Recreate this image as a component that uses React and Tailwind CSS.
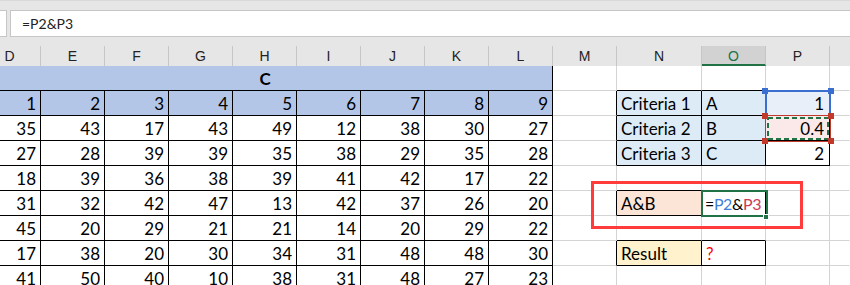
import React from "react";

const rows = [
  [35, 43, 17, 43, 49, 12, 38, 30, 27],
  [27, 28, 39, 39, 35, 38, 29, 35, 28],
  [18, 39, 36, 38, 39, 41, 42, 17, 22],
  [31, 32, 42, 47, 13, 42, 37, 26, 20],
  [45, 20, 29, 21, 21, 14, 20, 29, 22],
  [17, 38, 20, 30, 34, 31, 48, 48, 30],
  [41, 50, 40, 10, 38, 31, 48, 27, 23],
];

// column widths D..L (D is scrolled partly off the left edge)
const widths = [
  "w-[41px]",
  "w-[64px]",
  "w-[64px]",
  "w-[64px]",
  "w-[64px]",
  "w-[64px]",
  "w-[64px]",
  "w-[64px]",
  "w-[64px]",
];

const letters = ["D", "E", "F", "G", "H", "I", "J", "K", "L"];

function Num({ w, children, blue }) {
  return (
    <div
      className={`${w} h-[25px] shrink-0 border-r border-b border-black text-right pr-[4px] pt-[1px] leading-[23px] ${
        blue ? "bg-[#b4c6e7]" : ""
      }`}
    >
      {children}
    </div>
  );
}

// right side cells M..Q
function Cell({ w, bg = "", r = "border-r-[#d4d4d4]", b = "border-b-[#d4d4d4]", cls = "", children }) {
  return (
    <div className={`${w} h-[25px] shrink-0 border-r border-b ${r} ${b} ${bg} pt-[1px] leading-[23px] ${cls}`}>
      {children}
    </div>
  );
}

function RightRow({ m, n, o, p }) {
  return (
    <div className="flex">
      <Cell w="w-[64px]" r={m ? "border-r-black" : "border-r-[#d4d4d4]"} />
      <Cell w="w-[85px]" {...n} />
      <Cell w="w-[64px]" {...o} />
      <Cell w="w-[64px]" {...p} />
      <Cell w="w-[20px]" r="border-r-transparent" />
    </div>
  );
}

const blk = { r: "border-r-black", b: "border-b-black" };

function Corner({ cls }) {
  return <div className={`absolute w-[6px] h-[6px] ${cls}`} />;
}

export default function App() {
  return (
    <div className="relative w-[850px] h-[285px] overflow-hidden bg-white text-[17px] text-black font-['Lato','Liberation_Sans',sans-serif]">
      {/* formula bar */}
      <div className="h-[10px] bg-[#e6e6e6] border-t border-[#d9d9d9]" />
      <div className="flex h-[27px] bg-[#e6e6e6]">
        <div className="w-[7px] bg-white border-y border-r border-[#c6c6c6]" />
        <div className="ml-[3px] flex-1 bg-white border-y border-l border-[#c6c6c6] pl-[11px] text-[14px] leading-[25px] text-[#222]">
          =P2&amp;P3
        </div>
      </div>
      <div className="h-[9px] bg-[#e6e6e6]" />

      {/* column headers */}
      <div className="flex h-[20px] bg-[#e6e6e6] text-[14px] text-[#222] leading-[20px] font-['Liberation_Sans',sans-serif]">
        {letters.map((l, i) => (
          <div
            key={l}
            className={`${widths[i]} shrink-0 border-r border-[#c6c6c6] text-center ${i === 0 ? "pr-[21px]" : ""}`}
          >
            {l}
          </div>
        ))}
        <div className="w-[64px] shrink-0 border-r border-[#c6c6c6] text-center">M</div>
        <div className="w-[85px] shrink-0 border-r border-[#c6c6c6] text-center">N</div>
        <div className="w-[64px] shrink-0 border-r border-[#c6c6c6] bg-[#d2d2d2] border-b-2 border-b-[#217346] text-center text-[#217346]">
          O
        </div>
        <div className="w-[64px] shrink-0 border-r border-[#c6c6c6] text-center">P</div>
        <div className="w-[20px] shrink-0" />
      </div>

      {/* grid */}
      <div className="flex">
        <div className="flex flex-col">
          <div className="w-[553px] h-[25px] bg-[#b4c6e7] border-r border-b border-black text-center font-bold pr-[22px] pt-[1px] leading-[23px]">
            C
          </div>
          <div className="flex">
            {widths.map((w, i) => (
              <Num key={i} w={w} blue>
                {i + 1}
              </Num>
            ))}
          </div>
          {rows.map((row, ri) => (
            <div key={ri} className="flex">
              {row.map((v, i) => (
                <Num key={i} w={widths[i]}>
                  {v}
                </Num>
              ))}
            </div>
          ))}
        </div>

        <div className="flex flex-col">
          {/* row 1 */}
          <RightRow n={{ b: "border-b-black" }} o={{ b: "border-b-black" }} p={{ b: "border-b-black" }} />
          {/* rows 2-4 */}
          {[
            ["Criteria 1", "A", "1", "bg-[#e9eff9]"],
            ["Criteria 2", "B", "0.4", "bg-[#fbe9e9]"],
            ["Criteria 3", "C", "2", ""],
          ].map(([a, b, c, pbg]) => (
            <RightRow
              key={a}
              m
              n={{ ...blk, bg: "bg-[#ddebf7]", cls: "pl-[4px]", children: a }}
              o={{ ...blk, bg: "bg-[#ddebf7]", cls: "pl-[4px]", children: b }}
              p={{ ...blk, bg: pbg, cls: "text-right pr-[5px]", children: c }}
            />
          ))}
          {/* row 5 */}
          <RightRow n={{ b: "border-b-black" }} o={{ b: "border-b-black" }} />
          {/* row 6 */}
          <RightRow
            m
            n={{ ...blk, bg: "bg-[#fce4d6]", cls: "pl-[4px]", children: "A&B" }}
            o={{
              ...blk,
              cls: "pl-[3px] whitespace-nowrap text-[16px] tracking-[-0.4px]",
              children: (
                <>
                  =<span className="text-[#3f7fd8]">P2</span>&amp;
                  <span className="text-[#cc3b55]">P3</span>
                </>
              ),
            }}
          />
          {/* row 7 */}
          <RightRow n={{ b: "border-b-black" }} o={{ b: "border-b-black" }} />
          {/* row 8 */}
          <RightRow
            m
            n={{ ...blk, bg: "bg-[#fff2cc]", cls: "pl-[4px]", children: "Result" }}
            o={{ ...blk, cls: "pl-[4px] text-[#ff0000]", children: "?" }}
          />
          {/* row 9 */}
          <RightRow />
        </div>
      </div>

      {/* P2 reference highlight */}
      <div className="absolute left-[765px] top-[90px] w-[66px] h-[26px] border-2 border-b-0 border-[#3b6fcf]" />
      <Corner cls="left-[762px] top-[88px] bg-[#3b6fcf]" />
      <Corner cls="left-[828px] top-[88px] bg-[#3b6fcf]" />

      {/* P3 reference highlight */}
      <div className="absolute left-[765px] top-[115px] w-[66px] h-[27px] border border-[#c0392b]" />
      <svg className="absolute left-[766px] top-[116px]" width="64" height="25">
        <rect x="2" y="2" width="60" height="21" fill="none" stroke="#217346" strokeWidth="2" strokeDasharray="5 3" />
      </svg>
      <Corner cls="left-[762px] top-[113px] bg-[#c0392b]" />
      <Corner cls="left-[828px] top-[113px] bg-[#c0392b]" />
      <Corner cls="left-[762px] top-[138px] bg-[#c0392b]" />
      <Corner cls="left-[828px] top-[138px] bg-[#c0392b]" />

      {/* active cell O6 */}
      <div className="absolute left-[701px] top-[190px] w-[67px] h-[27px] border-2 border-[#217346]" />
      <div className="absolute left-[763px] top-[214px] w-[6px] h-[6px] bg-[#217346] border border-white" />

      {/* red callout box */}
      <div className="absolute left-[591px] top-[181px] w-[212px] h-[48px] border-[3px] border-[#ff3b3b]" />
    </div>
  );
}
